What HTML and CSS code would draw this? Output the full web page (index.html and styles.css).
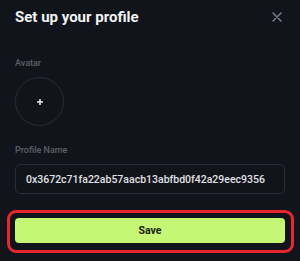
FILE: index.html
```html
<!DOCTYPE html>
<html>
<head>
<meta charset="utf-8">
<link rel="stylesheet" href="styles.css">
</head>
<body>
<div class="modal">
  <div class="header">
    <h1 class="title">Set up your profile</h1>
    <button class="close" aria-label="Close">
      <svg width="10" height="10" viewBox="0 0 10 10"><path d="M1 1L9 9M9 1L1 9" stroke="currentColor" stroke-width="1.4" stroke-linecap="round"/></svg>
    </button>
  </div>
  <div class="field field-avatar">
    <div class="label">Avatar</div>
    <button class="avatar" aria-label="Add avatar">
      <svg width="8" height="8" viewBox="0 0 8 8"><path d="M4 1V7M1 4H7" stroke="currentColor" stroke-width="1.5"/></svg>
    </button>
  </div>
  <div class="field field-name">
    <div class="label">Profile Name</div>
    <div class="input">0x3672c71fa22ab57aacb13abfbd0f42a29eec9356</div>
  </div>
  <div class="actions">
    <button class="save">Save</button>
  </div>
</div>
</body>
</html>
```
FILE: styles.css
```css
* { box-sizing: border-box; }
html, body { margin: 0; padding: 0; }
body {
  background: #12141b;
  font-family: Roboto, "Liberation Sans", sans-serif;
  width: 300px;
  height: 261px;
  overflow: hidden;
}
.modal {
  padding: 7px 15px 0 15px;
  display: flex;
  flex-direction: column;
}
.header {
  display: flex;
  align-items: center;
  justify-content: space-between;
  height: 20px;
}
.title {
  margin: 0;
  font-size: 15px;
  line-height: 20px;
  font-weight: 700;
  color: #f1f2f4;
}
.close {
  background: none;
  border: 0;
  padding: 0;
  color: #80838c;
  width: 10px;
  height: 10px;
  display: flex;
  margin-right: 3px;
}
.field { display: flex; flex-direction: column; }
.field-avatar { margin-top: 31px; gap: 8px; }
.field-name { margin-top: 19px; gap: 8px; }
.label {
  font-size: 9px;
  line-height: 11px;
  font-weight: 500;
  color: #5d6069;
}
.avatar {
  width: 49px;
  height: 49px;
  border-radius: 50%;
  border: 1px solid #2a2d35;
  background: transparent;
  color: #ececec;
  display: flex;
  align-items: center;
  justify-content: center;
  padding: 0;
}
.input {
  height: 30px;
  border: 1px solid #2a2d35;
  border-radius: 5px;
  padding: 0 10px;
  display: flex;
  align-items: center;
  font-size: 10.5px;
  font-weight: 500;
  color: #e0e1e4;
  white-space: nowrap;
}
.actions {
  margin-top: 24px;
  position: relative;
}
.actions::after {
  content: "";
  position: absolute;
  top: -8px;
  left: -8px;
  right: -9px;
  bottom: -10px;
  border: 3px solid #e8262e;
  border-radius: 9px;
  pointer-events: none;
}
.save {
  display: block;
  width: 100%;
  height: 25px;
  border: 0;
  border-radius: 4px;
  background: #c5f774;
  color: #1b1d16;
  font-family: Roboto, "Liberation Sans", sans-serif;
  font-size: 10.5px;
  font-weight: 700;
  padding: 0;
}
```
